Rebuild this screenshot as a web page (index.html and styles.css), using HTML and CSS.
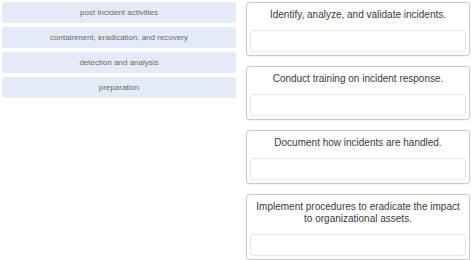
FILE: index.html
```html
<!DOCTYPE html>
<html lang="en">

<head>
    <meta charset="UTF-8">
    <title>Incident Response Matching</title>
    <link rel="stylesheet" href="styles.css">
</head>

<body>
    <main class="board">
        <div class="options">
            <div class="option">post incident activities</div>
            <div class="option">containment, eradication, and recovery</div>
            <div class="option">detection and analysis</div>
            <div class="option">preparation</div>
        </div>

        <div class="targets">
            <div class="target">
                <p class="prompt">Identify, analyze, and validate incidents.</p>
                <div class="drop"></div>
            </div>
            <div class="target">
                <p class="prompt">Conduct training on incident response.</p>
                <div class="drop"></div>
            </div>
            <div class="target">
                <p class="prompt">Document how incidents are handled.</p>
                <div class="drop"></div>
            </div>
            <div class="target">
                <p class="prompt">Implement procedures to eradicate the impact to organizational assets.</p>
                <div class="drop"></div>
            </div>
        </div>
    </main>
</body>

</html>
```

FILE: styles.css
```css
body {
    margin: 0;
    background-color: white;
    font-family: "Liberation Sans", Arial, sans-serif;
}

.board {
    display: grid;
    grid-template-columns: 234px 224px;
    column-gap: 10px;
    padding: 2px 4px 0 2px;
}

.options {
    display: flex;
    flex-direction: column;
    gap: 4px;
}

.option {
    height: 21px;
    line-height: 21px;
    background-color: #e4ebf6;
    border-radius: 2px;
    text-align: center;
    font-size: 8px;
    color: #6a6a6a;
}

.targets {
    display: flex;
    flex-direction: column;
    gap: 10px;
}

.target {
    border: 1px solid #c9c9c9;
    border-radius: 3px;
    padding: 0 3px 3px;
    box-shadow: 0 1px 1px rgba(0, 0, 0, 0.06);
}

.prompt {
    margin: 0;
    padding: 6px 4px 9px;
    text-align: center;
    font-size: 10px;
    line-height: 12px;
    color: #3a3a3a;
}

.drop {
    height: 20px;
    border: 1px solid #e6e6e6;
    border-radius: 3px;
}
```
